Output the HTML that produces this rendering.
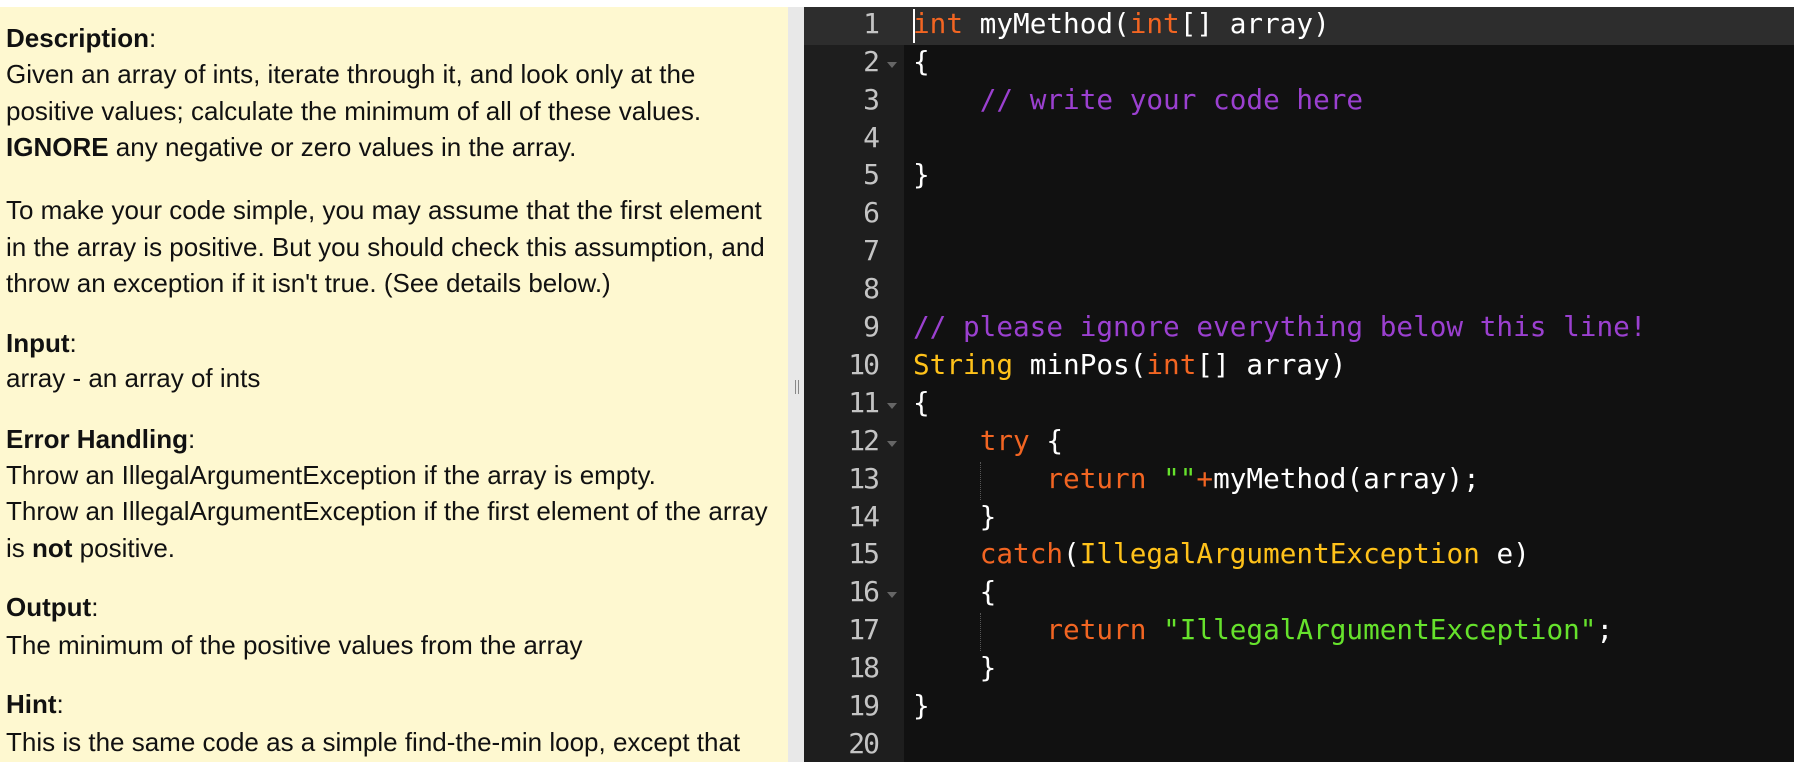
<!DOCTYPE html>
<html><head><meta charset="utf-8"><style>
body{margin:0;width:1794px;height:762px;overflow:hidden;background:#fff;position:relative}
#left{position:absolute;left:0;top:7px;width:788px;height:755px;background:#fef8d0}
.t{position:absolute;left:6px;height:36px;line-height:36px;font:26px "Liberation Sans",Arial,sans-serif;color:#111;white-space:nowrap}
b{font-weight:bold}
#split{position:absolute;left:788px;top:7px;width:16px;height:755px;background:#e8e8e8}
#grip{position:absolute;left:795px;top:380px;width:2px;height:14px;border-left:1px solid #888;border-right:1px solid #888;width:2px}
#gut{position:absolute;left:804px;top:7px;width:100px;height:755px;background:#1e1e1e}
#code{position:absolute;left:904px;top:7px;width:890px;height:755px;background:#111}
.hl{position:absolute;left:804px;top:7px;width:990px;height:38px;background:#2d2d2d}
.ln{position:absolute;left:804px;width:74px;text-align:right;height:38px;line-height:40px;font:28px "DejaVu Sans Mono",monospace;color:#c4c4c4;letter-spacing:-2px}
.c{position:absolute;left:913px;height:38px;line-height:38px;font:27.7px "DejaVu Sans Mono",monospace;color:#fff;white-space:pre}
.k{color:#f26522}.m{color:#9b40d0}.y{color:#ffc21a}.g{color:#66e22c}
.f{position:absolute;left:887px;width:0;height:0;border-left:5px solid transparent;border-right:5px solid transparent;border-top:6px solid #666}
.ig{position:absolute;width:0;border-left:1px dotted #555;height:38px}
#cur{position:absolute;left:913px;top:9px;width:2px;height:34px;background:#fff}
</style></head><body>
<div id="left">
<div class="t" style="top:16px"><b>Description</b>:</div>
<div class="t" style="top:52px">Given an array of ints, iterate through it, and look only at the</div>
<div class="t" style="top:89px">positive values; calculate the minimum of all of these values.</div>
<div class="t" style="top:125px"><b>IGNORE</b> any negative or zero values in the array.</div>
<div class="t" style="top:188px">To make your code simple, you may assume that the first element</div>
<div class="t" style="top:225px">in the array is positive. But you should check this assumption, and</div>
<div class="t" style="top:261px">throw an exception if it isn't true. (See details below.)</div>
<div class="t" style="top:321px"><b>Input</b>:</div>
<div class="t" style="top:356px">array - an array of ints</div>
<div class="t" style="top:417px"><b>Error Handling</b>:</div>
<div class="t" style="top:453px">Throw an IllegalArgumentException if the array is empty.</div>
<div class="t" style="top:489px">Throw an IllegalArgumentException if the first element of the array</div>
<div class="t" style="top:526px">is <b>not</b> positive.</div>
<div class="t" style="top:585px"><b>Output</b>:</div>
<div class="t" style="top:623px">The minimum of the positive values from the array</div>
<div class="t" style="top:682px"><b>Hint</b>:</div>
<div class="t" style="top:720px">This is the same code as a simple find-the-min loop, except that</div>
</div>
<div id="split"></div><div id="grip"></div>
<div id="gut"></div><div id="code"></div>
<div class="hl"></div>
<div class="ln" style="top:7px">1</div>
<div class="ln" style="top:45px">2</div>
<div class="ln" style="top:83px">3</div>
<div class="ln" style="top:121px">4</div>
<div class="ln" style="top:158px">5</div>
<div class="ln" style="top:196px">6</div>
<div class="ln" style="top:234px">7</div>
<div class="ln" style="top:272px">8</div>
<div class="ln" style="top:310px">9</div>
<div class="ln" style="top:348px">10</div>
<div class="ln" style="top:386px">11</div>
<div class="ln" style="top:424px">12</div>
<div class="ln" style="top:462px">13</div>
<div class="ln" style="top:500px">14</div>
<div class="ln" style="top:537px">15</div>
<div class="ln" style="top:575px">16</div>
<div class="ln" style="top:613px">17</div>
<div class="ln" style="top:651px">18</div>
<div class="ln" style="top:689px">19</div>
<div class="ln" style="top:727px">20</div>
<div class="f" style="top:62px"></div>
<div class="f" style="top:403px"></div>
<div class="f" style="top:441px"></div>
<div class="f" style="top:592px"></div>
<div class="ig" style="left:980px;top:462px"></div>
<div class="ig" style="left:980px;top:613px"></div>
<div class="c" style="top:7px"><span class="k">int</span> myMethod(<span class="k">int</span>[] array)</div>
<div class="c" style="top:45px">{</div>
<div class="c" style="top:83px">    <span class="m">// write your code here</span></div>
<div class="c" style="top:158px">}</div>
<div class="c" style="top:310px"><span class="m">// please ignore everything below this line!</span></div>
<div class="c" style="top:348px"><span class="y">String</span> minPos(<span class="k">int</span>[] array)</div>
<div class="c" style="top:386px">{</div>
<div class="c" style="top:424px">    <span class="k">try</span> {</div>
<div class="c" style="top:462px">        <span class="k">return</span> <span class="g">""</span><span class="k">+</span>myMethod(array);</div>
<div class="c" style="top:500px">    }</div>
<div class="c" style="top:537px">    <span class="k">catch</span>(<span class="y">IllegalArgumentException</span> e)</div>
<div class="c" style="top:575px">    {</div>
<div class="c" style="top:613px">        <span class="k">return</span> <span class="g">"IllegalArgumentException"</span>;</div>
<div class="c" style="top:651px">    }</div>
<div class="c" style="top:689px">}</div>
<div id="cur"></div>
</body></html>
